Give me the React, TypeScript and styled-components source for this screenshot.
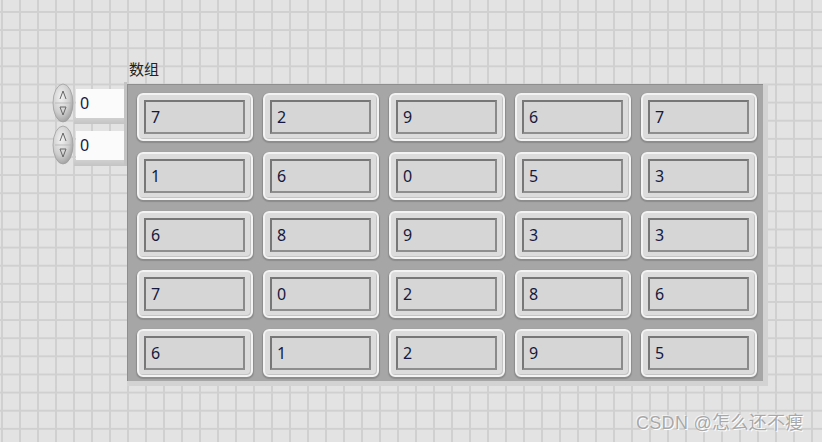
import React from "react";
import styled, { createGlobalStyle } from "styled-components";

const Global = createGlobalStyle`
  html, body { margin: 0; padding: 0; }
  body {
    width: 822px;
    height: 442px;
    overflow: hidden;
    background-color: #e3e3e3;
    background-image:
      linear-gradient(to right, #d0d0d0 2px, transparent 2px),
      linear-gradient(to bottom, #d0d0d0 2px, transparent 2px);
    background-size: 18px 18.13px;
    background-position: 1px 11px;
    font-family: "Noto Sans", "Noto Sans CJK SC", sans-serif;
  }
`;

const Page = styled.div`
  position: relative;
  width: 822px;
  height: 442px;
  box-sizing: border-box;
  padding: 58px 0 0 52px;
`;

const Control = styled.div`
  display: flex;
  flex-direction: column;
`;

const Label = styled.div`
  margin-left: 77px;
  height: 22px;
  font-size: 15px;
  line-height: 22px;
  color: #222;
  font-family: "Noto Sans CJK SC", sans-serif;
  margin-bottom: 2px;
`;

const Body = styled.div`
  display: flex;
  align-items: flex-start;
`;

const IndexColumn = styled.div`
  display: flex;
  flex-direction: column;
`;

const IndexRow = styled.div`
  display: flex;
  align-items: flex-start;
  height: 42px;
`;

const Spinner = styled.div`
  width: 22px;
  height: 40px;
  margin-top: 1px;
`;

const IndexSlot = styled.div`
  width: 53px;
  height: 42px;
  box-sizing: border-box;
  padding: 7px 0 0 2px;
  background: linear-gradient(
    to bottom,
    transparent 0px,
    transparent 35px,
    #d2d2d2 35px,
    #c4c4c4 42px
  );
  border-right: 3px solid #c4c4c4;
`;

const IndexBox = styled.div`
  height: 29px;
  background: #fbfbfb;
  box-sizing: border-box;
  padding-left: 4px;
  font-size: 16px;
  line-height: 29px;
  color: #15193f;
`;

const Frame = styled.div`
  margin-top: 2px;
  display: grid;
  grid-template-columns: repeat(5, 116px);
  grid-auto-rows: 48px;
  column-gap: 10px;
  row-gap: 11px;
  padding: 9px 6px 4px 10px;
  background: #a6a6a6;
  border-right: 5px solid #d3d3d3;
  border-bottom: 5px solid #d3d3d3;
  box-shadow: inset 1px 1px 0 #8e8e8e;
`;

const Cell = styled.div`
  box-sizing: border-box;
  border-radius: 6px;
  background: #dcdcdc;
  border: 2px solid #f3f3f3;
  padding: 5px 6px 5px 5px;
  box-shadow: 0 1px 1px 1px #8c8c8c, inset -1px -1px 0 #c4c4c4;
  display: flex;
`;

const Value = styled.div`
  flex: 1;
  box-sizing: border-box;
  border: 2px solid #777;
  border-right-color: #8a8a8a;
  border-bottom-color: #8e8e8e;
  background: #d6d6d6;
  padding-left: 5px;
  font-size: 16px;
  color: #15193f;
  display: flex;
  align-items: center;
`;

const Watermark = styled.div`
  position: absolute;
  left: 636px;
  top: 408px;
  font-family: "Liberation Sans", "Noto Sans CJK SC", sans-serif;
  font-size: 18px;
  color: #a8a8a8;
  letter-spacing: 0.3px;
  text-shadow: 1px 1px 0 #ffffff, -1px -1px 0 #f2f2f2;
`;

const SpinnerIcon = () => (
  <svg width="22" height="40" viewBox="0 0 22 40">
    <defs>
      <radialGradient id="sg" cx="40%" cy="35%" r="70%">
        <stop offset="0%" stopColor="#f2f2f2" />
        <stop offset="60%" stopColor="#cfcfcf" />
        <stop offset="100%" stopColor="#9c9c9c" />
      </radialGradient>
    </defs>
    <ellipse cx="11" cy="20" rx="10" ry="19" fill="url(#sg)" stroke="#a0a0a0" strokeWidth="0.8" />
    <line x1="3" y1="20" x2="19" y2="20" stroke="#b4b4b4" strokeWidth="0.8" />
    <path d="M8 16 L11 8 L14 16" fill="none" stroke="#666" strokeWidth="1" />
    <path d="M8 24 L14 24 L11 32 Z" fill="none" stroke="#666" strokeWidth="1" />
  </svg>
);

const data = [
  [7, 2, 9, 6, 7],
  [1, 6, 0, 5, 3],
  [6, 8, 9, 3, 3],
  [7, 0, 2, 8, 6],
  [6, 1, 2, 9, 5],
];

export default function App() {
  return (
    <>
      <Global />
      <Page>
        <Control>
          <Label>数组</Label>
          <Body>
            <IndexColumn>
              {[0, 0].map((v, i) => (
                <IndexRow key={i}>
                  <Spinner>
                    <SpinnerIcon />
                  </Spinner>
                  <IndexSlot>
                    <IndexBox>{v}</IndexBox>
                  </IndexSlot>
                </IndexRow>
              ))}
            </IndexColumn>
            <Frame>
              {data.flat().map((v, i) => (
                <Cell key={i}>
                  <Value>{v}</Value>
                </Cell>
              ))}
            </Frame>
          </Body>
        </Control>
        <Watermark>CSDN @怎么还不瘦</Watermark>
      </Page>
    </>
  );
}
